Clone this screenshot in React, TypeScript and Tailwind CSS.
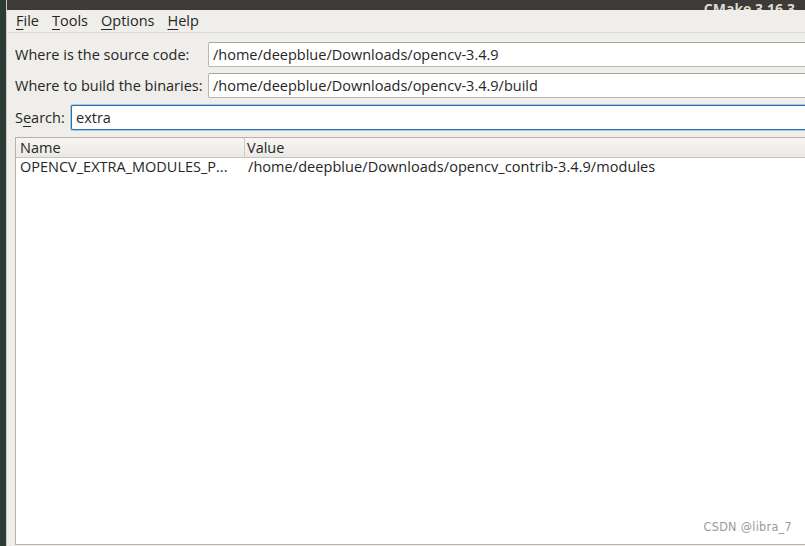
import React from "react";

const MENU = [
  { key: "F", rest: "ile" },
  { key: "T", rest: "ools" },
  { key: "O", rest: "ptions" },
  { key: "H", rest: "elp" },
];

function Field({ value, focused }: { value: string; focused?: boolean }) {
  return (
    <div
      className={`h-[25px] flex items-center pl-[4px] bg-white rounded-l-[2px] border border-r-0 ${
        focused
          ? "border-[#2f6ea8] shadow-[0_0_0_1px_#a9c8e6]"
          : "border-[#b9b6af] border-t-[#a8a59e]"
      }`}
    >
      <span className="truncate">{value}</span>
    </div>
  );
}

export default function App() {
  return (
    <div
      className="w-[805px] h-[546px] flex overflow-hidden text-[#262626] text-[14.5px]"
      style={{ fontFamily: '"Open Sans", "Noto Sans", sans-serif' }}
    >
      {/* desktop edge */}
      <div className="w-[6px] bg-[#2d3a36] shrink-0" />

      <div className="flex-1 flex flex-col bg-[#efeeea] border-l border-[#cfccc5] relative">
        {/* title bar, cut off at the top */}
        <div className="h-[10px] bg-[#3c3b37] flex justify-end items-end overflow-hidden pr-[10px]">
          <span className="font-bold text-[14px] leading-[14px] mb-[-6px] text-[#dfdbd2]">
            CMake 3.16.3
          </span>
        </div>

        {/* menu bar */}
        <div className="h-[23px] flex items-center gap-[13px] pl-[9px] pt-[1px] border-b border-[#dcdad5]">
          {MENU.map((m) => (
            <span key={m.key} className="leading-none">
              <span className="underline underline-offset-[3px]">{m.key}</span>
              {m.rest}
            </span>
          ))}
        </div>

        <div className="flex-1 flex flex-col pl-[8px] pt-[9px] pb-[1px]">
          <div className="grid grid-cols-[188px_1fr] gap-x-[5px] gap-y-[6px] items-center">
            <span className="whitespace-nowrap">Where is the source code:</span>
            <Field value="/home/deepblue/Downloads/opencv-3.4.9" />
            <span className="whitespace-nowrap">Where to build the binaries:</span>
            <Field value="/home/deepblue/Downloads/opencv-3.4.9/build" />
          </div>

          <div className="grid grid-cols-[51px_1fr] gap-x-[5px] items-center mt-[7px]">
            <span>
              S<span className="underline underline-offset-[3px]">e</span>arch:
            </span>
            <Field value="extra" focused />
          </div>

          <div className="flex-1 mt-[7px] bg-white border border-r-0 border-[#b6b3ac] flex flex-col">
            <div className="h-[20px] flex bg-gradient-to-b from-[#f7f6f4] to-[#ebe9e5] border-b border-[#c7c4bd]">
              <div className="w-[229px] pl-[4px] flex items-center border-r border-[#cfccc5]">Name</div>
              <div className="flex-1 pl-[2px] flex items-center">Value</div>
            </div>
            <div className="h-[17px] flex">
              <div className="w-[229px] pl-[4px] flex items-center whitespace-nowrap">
                OPENCV_EXTRA_MODULES_P...
              </div>
              <div className="flex-1 pl-[3px] flex items-center whitespace-nowrap tracking-[0.06px]">
                /home/deepblue/Downloads/opencv_contrib-3.4.9/modules
              </div>
            </div>
          </div>
        </div>

        <span
          className="absolute right-[13px] bottom-[9px] text-[12.5px] text-[#9a9a9a] tracking-[0.3px]"
          style={{ fontFamily: '"Liberation Sans Narrow", "DejaVu Sans Condensed", sans-serif' }}
        >
          CSDN @libra_7
        </span>
      </div>
    </div>
  );
}
